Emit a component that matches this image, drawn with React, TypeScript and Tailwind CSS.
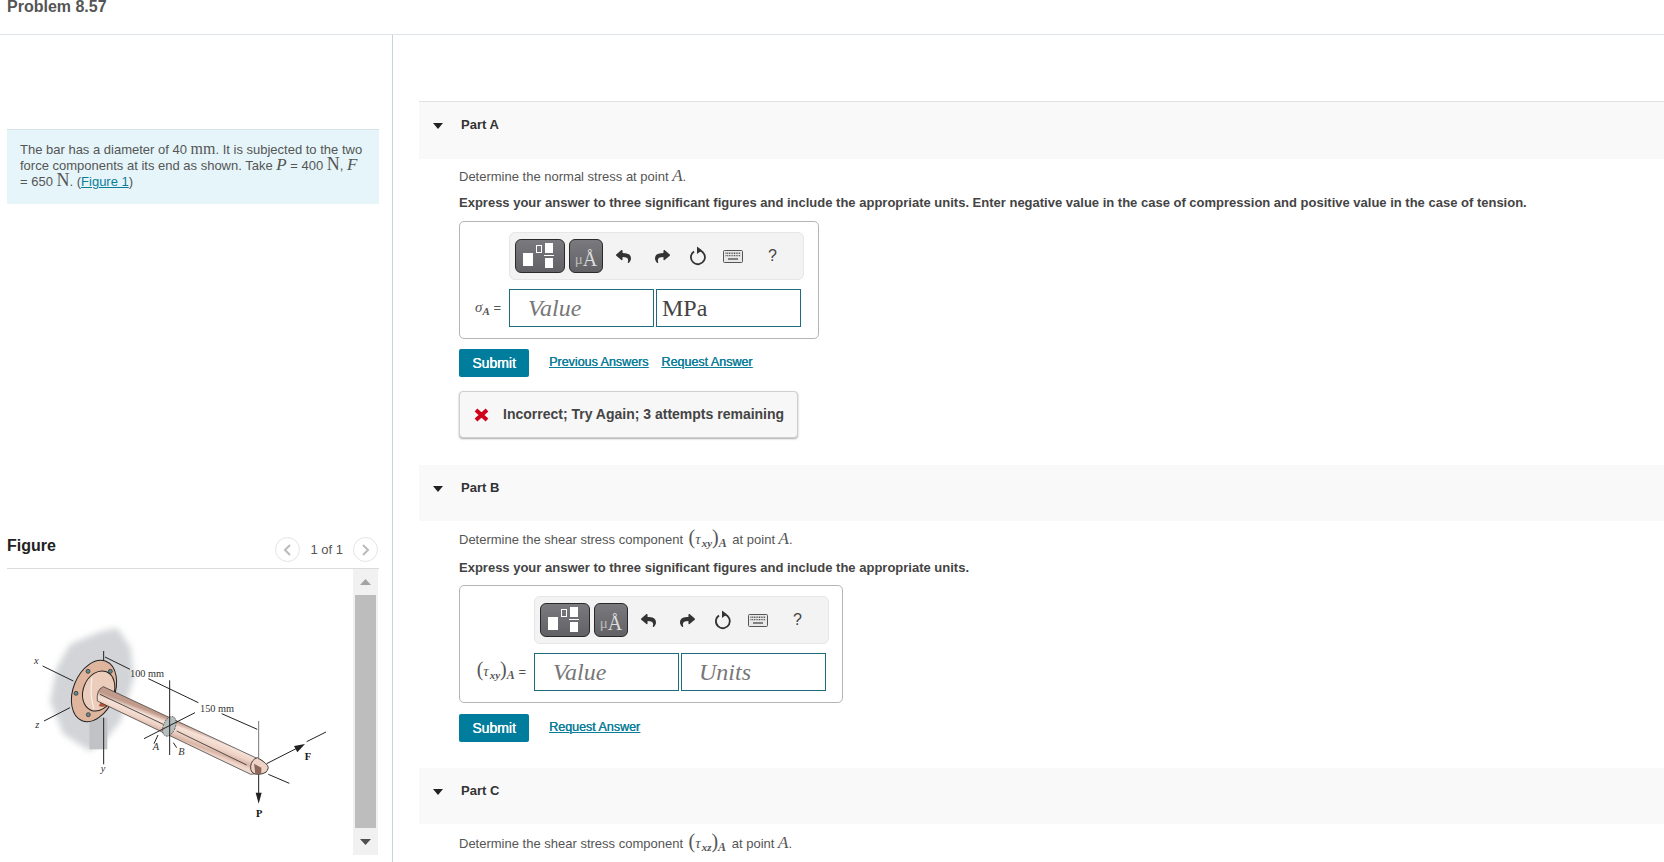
import React from 'react';
import { FaReply, FaShare } from 'react-icons/fa';

const sans = "font-['Liberation_Sans',Arial,sans-serif]";

// math in the problem text is set in a serif, like the MathJax output in the original
const M = ({ children }: { children: React.ReactNode }) => (
  <span className="font-['Liberation_Serif',serif] italic text-[17px] leading-[0]">{children}</span>
);
const U = ({ children }: { children: React.ReactNode }) => (
  <span className="font-['Liberation_Serif',serif] text-[16px] leading-[0]">{children}</span>
);
const N = () => (
  <span className="font-['Liberation_Serif',serif] text-[18px] leading-[0]">N</span>
);

const Tau = ({ sub }: { sub: string }) => (
  <span className="font-['Liberation_Serif',serif] italic text-[15px] leading-[0] whitespace-nowrap">
    <span className="not-italic text-[20px] leading-[0]">(</span>τ
    <sub className="ml-px text-[11px] font-bold leading-[0]">{sub}</sub>
    <span className="not-italic text-[20px] leading-[0]">)</span>
    <sub className="text-[12px] font-bold leading-[0]">A</sub>
  </span>
);

const PartHeader = ({ name, border }: { name: string; border?: boolean }) => (
  <div className={`${border ? 'h-[58px] border-t border-[#e2e2e2]' : 'h-[56px]'} bg-[#f9f9f9] flex items-start`}>
    <svg width="10" height="6" viewBox="0 0 10 6" className="ml-[14px] mt-[21px]">
      <path d="M0 0h10L5 6z" fill="#222" />
    </svg>
    <span className="ml-[18px] mt-[14px] text-[13px] leading-[18px] font-bold text-[#333]">{name}</span>
  </div>
);

const ResetIcon = () => (
  <svg width="18" height="20" viewBox="0 0 18 20">
    <path d="M10.5 4.4A7 7 0 1 1 5 5.4" fill="none" stroke="#333" strokeWidth="1.8" />
    <path d="M8 0.5L13 4.3L8 8z" fill="#333" />
  </svg>
);

const KeyboardIcon = () => (
  <svg width="20" height="13" viewBox="0 0 20 13">
    <rect x="0.5" y="0.5" width="19" height="12" rx="1" fill="#e8e8e8" stroke="#555" />
    <path d="M2.5 3.2h15M2.5 5.6h15" stroke="#555" strokeWidth="1.4" strokeDasharray="1 0.7" />
    <path d="M5 9h10" stroke="#555" strokeWidth="1.4" />
  </svg>
);

const Toolbar = () => (
  <div className="w-[295px] h-[48px] bg-[#f3f3f3] border border-[#e6e6e6] rounded-[6px] flex items-center pl-[5px]">
    <div className="w-[50px] h-[34px] rounded-[6px] border border-[#2a2a2a] bg-gradient-to-b from-[#7a7a7e] to-[#626266]">
      <svg width="48" height="32" viewBox="0 0 48 32">
        <rect x="7" y="13" width="10" height="13" fill="#fff" />
        <rect x="20.5" y="5.5" width="5" height="7" fill="none" stroke="#fff" />
        <rect x="29" y="3" width="8" height="10" fill="#fff" />
        <rect x="28" y="15" width="10" height="1" fill="#fff" />
        <rect x="29" y="18" width="8" height="10" fill="#fff" />
      </svg>
    </div>
    <div className="ml-[4px] w-[34px] h-[34px] rounded-[6px] border border-[#2a2a2a] bg-gradient-to-b from-[#7a7a7e] to-[#626266] flex items-end justify-center pb-[3px] font-['Liberation_Serif',serif] leading-[20px]">
      <span className="text-[15px] text-[#bbb]">μ</span>
      <span className="text-[20px] text-[#ddd]">Å</span>
    </div>
    <FaReply className="ml-[13px] text-[15px] text-[#333]" />
    <FaShare className="ml-[24px] text-[15px] text-[#333]" />
    <div className="ml-[19px]"><ResetIcon /></div>
    <div className="ml-[16px]"><KeyboardIcon /></div>
    <span className="ml-[25px] text-[16px] text-[#444]">?</span>
  </div>
);

const AnswerBox = ({ label, second, boxClass, labelClass }: {
  label: React.ReactNode;
  second: React.ReactNode;
  boxClass: string;
  labelClass: string;
}) => (
  <div className={`${boxClass} h-[118px] border border-[#b5b5b5] rounded-[5px] pt-[10px]`}>
    <div className="flex">
      <div className={labelClass} />
      <Toolbar />
    </div>
    <div className="flex mt-[9px] items-center">
      <div className={`${labelClass} pr-[8px] text-right text-[13px] text-[#555] whitespace-nowrap`}>{label}</div>
      <div className="w-[145px] h-[38px] border border-[#1d6b7d] flex items-center pl-[18px] font-['Liberation_Serif',serif] italic text-[24px] text-[#777]">Value</div>
      <div className="ml-[2px] w-[145px] h-[38px] border border-[#1d6b7d] flex items-center font-['Liberation_Serif',serif] text-[24px]">{second}</div>
    </div>
  </div>
);

const SubmitRow = ({ links }: { links: string[] }) => (
  <div className="flex items-start">
    <button className="w-[70px] h-[28px] bg-[#007c9c] rounded-[2px] text-white text-[14px] font-normal [text-shadow:0.3px_0_0_#fff]">Submit</button>
    <div className="ml-[20px] mt-[5px] flex gap-[13px]">
      {links.map((l) => (
        <a key={l} className="text-[12.5px] leading-[16px] text-[#0a7d99] underline [text-shadow:0.4px_0_0_#0a7d99]">{l}</a>
      ))}
    </div>
  </div>
);

const Figure = () => (
  <svg width="320" height="220" viewBox="0 0 960 660">
    <defs>
      <filter id="soft" x="-20%" y="-20%" width="140%" height="140%"><feGaussianBlur stdDeviation="9" /></filter>
      <linearGradient id="shaft" gradientUnits="userSpaceOnUse" x1="440" y1="320" x2="420" y2="372">
        <stop offset="0" stopColor="#c09a8a" />
        <stop offset="0.25" stopColor="#f6e2d8" />
        <stop offset="0.55" stopColor="#efd3c6" />
        <stop offset="0.8" stopColor="#d9b5a5" />
        <stop offset="1" stopColor="#f0d8cc" />
      </linearGradient>
    </defs>
    <path d="M150 100L240 62L292 50L332 110L342 200L302 330L262 380L210 420L130 370L90 270L110 170Z" fill="#d2d4d7" filter="url(#soft)" />
    <rect x="208" y="320" width="54" height="95" fill="#c0c2c5" />
    <g stroke="#222" strokeWidth="3" fill="none">
      <path d="M68 165L160 210M72 330L150 290M251 120V240M251 320V460" />
    </g>
    <ellipse cx="222" cy="240" rx="62" ry="96" transform="rotate(22 222 240)" fill="#dfb59e" stroke="#222" strokeWidth="3" />
    <ellipse cx="236" cy="240" rx="46" ry="62" transform="rotate(22 236 240)" fill="#ecccba" stroke="#222" strokeWidth="3" />
    <path d="M216 200Q208 250 222 295" stroke="#fff" strokeWidth="2.5" fill="none" />
    <path d="M236 285Q262 295 280 262L262 240Z" fill="#b0503a" />
    <circle cx="204" cy="181" r="6" fill="#5f8a90" stroke="#222" strokeWidth="2" />
    <circle cx="271" cy="181" r="6" fill="#5f8a90" stroke="#222" strokeWidth="2" />
    <circle cx="168" cy="247" r="6" fill="#5f8a90" stroke="#222" strokeWidth="2" />
    <circle cx="205" cy="311" r="6" fill="#5f8a90" stroke="#222" strokeWidth="2" />
    <path d="M250 227L728 450L738 484L692 490L232 270Q228 236 250 227Z" fill="url(#shaft)" stroke="#222" strokeWidth="2" />
    <path d="M240 250L430 340M470 360L680 462" stroke="#333" strokeWidth="2.5" fill="none" />
    <ellipse cx="448" cy="346" rx="18" ry="31" transform="rotate(22 448 346)" fill="#b5bdbd" stroke="#333" strokeWidth="2" strokeDasharray="5 3" />
    <path d="M712 440Q744 458 745 470Q742 490 712 490Q690 488 692 466Q694 446 712 440Z" fill="#efd3c6" stroke="#222" strokeWidth="2.5" />
    <path d="M702 458L724 470V490H706Z" fill="#8c6658" />
    <g stroke="#222" strokeWidth="3" fill="none">
      <path d="M255 138L330 175M385 203L535 275M449 208V432M605 308L712 355M372 383L525 305M414 372L402 398M460 395L470 410" />
      <path d="M745 490L808 517M740 458L830 412M860 392L918 363M716 490V550" />
    </g>
    <path d="M716 330V445" stroke="#777" strokeWidth="3" />
    <path d="M855 399L822 405L832 424Z M716 578L707 545H725Z" fill="#222" />
    <g fontFamily="'Liberation Serif',serif" fontSize="31" fill="#333">
      <text x="330" y="198">100 mm</text>
      <text x="540" y="302">150 mm</text>
      <text x="42" y="160" fontStyle="italic">x</text>
      <text x="46" y="350" fontStyle="italic">z</text>
      <text x="242" y="482" fontStyle="italic">y</text>
      <text x="398" y="418" fontStyle="italic">A</text>
      <text x="475" y="432" fontStyle="italic">B</text>
      <text x="854" y="447" fontWeight="bold" fill="#111">F</text>
      <text x="708" y="618" fontWeight="bold" fill="#111">P</text>
    </g>
  </svg>
);

const Pager = () => (
  <div className="flex items-center mb-[6px] mr-[1px]">
    <span className="w-[25px] h-[25px] rounded-full border border-[#e4e4e4] flex items-center justify-center">
      <svg width="9" height="12" viewBox="0 0 9 12"><path d="M7 1L2 6l5 5" fill="none" stroke="#bbb" strokeWidth="2" /></svg>
    </span>
    <span className="mx-[10px] text-[13px] text-[#555]">1 of 1</span>
    <span className="w-[25px] h-[25px] rounded-full border border-[#e4e4e4] flex items-center justify-center">
      <svg width="9" height="12" viewBox="0 0 9 12"><path d="M2 1l5 5-5 5" fill="none" stroke="#bbb" strokeWidth="2" /></svg>
    </span>
  </div>
);

const Scrollbar = () => (
  <div className="w-[25px] h-[286px] mr-[1px] bg-[#f1f1f1] flex flex-col items-center px-[2px]">
    <div className="h-[26px] flex items-center">
      <svg width="11" height="6" viewBox="0 0 11 6"><path d="M0 6h11L5.5 0z" fill="#a3a3a3" /></svg>
    </div>
    <div className="w-full h-[233px] bg-[#bdbdbd]" />
    <div className="h-[27px] flex items-center">
      <svg width="11" height="6" viewBox="0 0 11 6"><path d="M0 0h11L5.5 6z" fill="#505050" /></svg>
    </div>
  </div>
);

export default function App() {
  return (
    <div className={`${sans} w-[1664px] h-[862px] overflow-hidden bg-white text-[#555]`}>
      <div className="h-[35px] border-b border-[#dde3e6] overflow-hidden">
        <h1 className="ml-[7px] text-[16px] leading-[14px] font-bold text-[#555]">Problem 8.57</h1>
      </div>
      <div className="flex h-[827px]">
        <div className="w-[393px] border-r border-[#c6d3da] shrink-0 px-[7px]">
          <div className="mt-[94px] w-[372px] h-[75px] bg-[#e5f5f9] border-t border-[#d5e3e8] pl-[13px] pt-[12px] text-[13px] leading-[16px] text-[#555] whitespace-nowrap">
            The bar has a diameter of 40 <U>mm</U>. It is subjected to the two<br />
            force components at its end as shown. Take <M>P</M> = 400 <N />, <M>F</M><br />
            = 650 <N />. (<a className="text-[#0a7d99] underline">Figure 1</a>)
          </div>
          <div className="mt-[326px] w-[372px] h-[39px] border-b border-[#d8dcdf] flex items-end justify-between">
            <h2 className="mb-[12px] text-[16px] leading-[20px] font-bold text-[#222]">Figure</h2>
            <Pager />
          </div>
          <div className="w-[372px] flex justify-between">
            <div className="ml-[13px] mt-[42px]"><Figure /></div>
            <Scrollbar />
          </div>
        </div>
        <div className="flex-1 pl-[26px] pt-[66px] min-w-0">
          <PartHeader name="Part A" border />
          <div className="pl-[40px]">
            <p className="mt-[9px] h-[18px] text-[13px] leading-[18px]">Determine the normal stress at point <M>A</M>.</p>
            <p className="mt-[8px] text-[13px] leading-[18px] font-bold text-[#444] whitespace-nowrap">Express your answer to three significant figures and include the appropriate units. Enter negative value in the case of compression and positive value in the case of tension.</p>
            <div className="mt-[9px]">
              <AnswerBox
                boxClass="w-[360px]"
                labelClass="w-[49px]"
                label={<><span className="font-['Liberation_Serif',serif] italic text-[15px] leading-[0]">σ<sub className="text-[11px] font-bold leading-[0]">A</sub></span> =</>}
                second={<span className="ml-[5px] text-[#444]">MPa</span>}
              />
            </div>
            <div className="mt-[10px]"><SubmitRow links={['Previous Answers', 'Request Answer']} /></div>
            <div className="mt-[14px] w-[339px] h-[47px] bg-[#f7f7f7] border border-[#cfcfcf] rounded-[4px] shadow-[0_1px_2px_#aaa] flex items-center pl-[14px]">
              <svg width="15" height="14" viewBox="0 0 15 14"><path d="M2 2l11 10M13 2L2 12" stroke="#d0021b" strokeWidth="4" /></svg>
              <span className="ml-[14px] text-[14px] font-bold text-[#444]">Incorrect; Try Again; 3 attempts remaining</span>
            </div>
          </div>
          <div className="mt-[27px]"><PartHeader name="Part B" /></div>
          <div className="pl-[40px]">
            <p className="mt-[9px] h-[20px] text-[13px] leading-[20px]">Determine the shear stress component <span className="mx-[2px]"><Tau sub="xy" /></span> at point <M>A</M>.</p>
            <p className="mt-[9px] text-[13px] leading-[18px] font-bold text-[#444]">Express your answer to three significant figures and include the appropriate units.</p>
            <div className="mt-[8px]">
              <AnswerBox
                boxClass="w-[384px]"
                labelClass="w-[74px]"
                label={<><Tau sub="xy" /> =</>}
                second={<span className="ml-[17px] italic text-[#777]">Units</span>}
              />
            </div>
            <div className="mt-[11px]"><SubmitRow links={['Request Answer']} /></div>
          </div>
          <div className="mt-[26px]"><PartHeader name="Part C" /></div>
          <div className="pl-[40px]">
            <p className="mt-[10px] h-[20px] text-[13px] leading-[20px]">Determine the shear stress component <span className="mx-[2px]"><Tau sub="xz" /></span> at point <M>A</M>.</p>
          </div>
        </div>
      </div>
    </div>
  );
}
